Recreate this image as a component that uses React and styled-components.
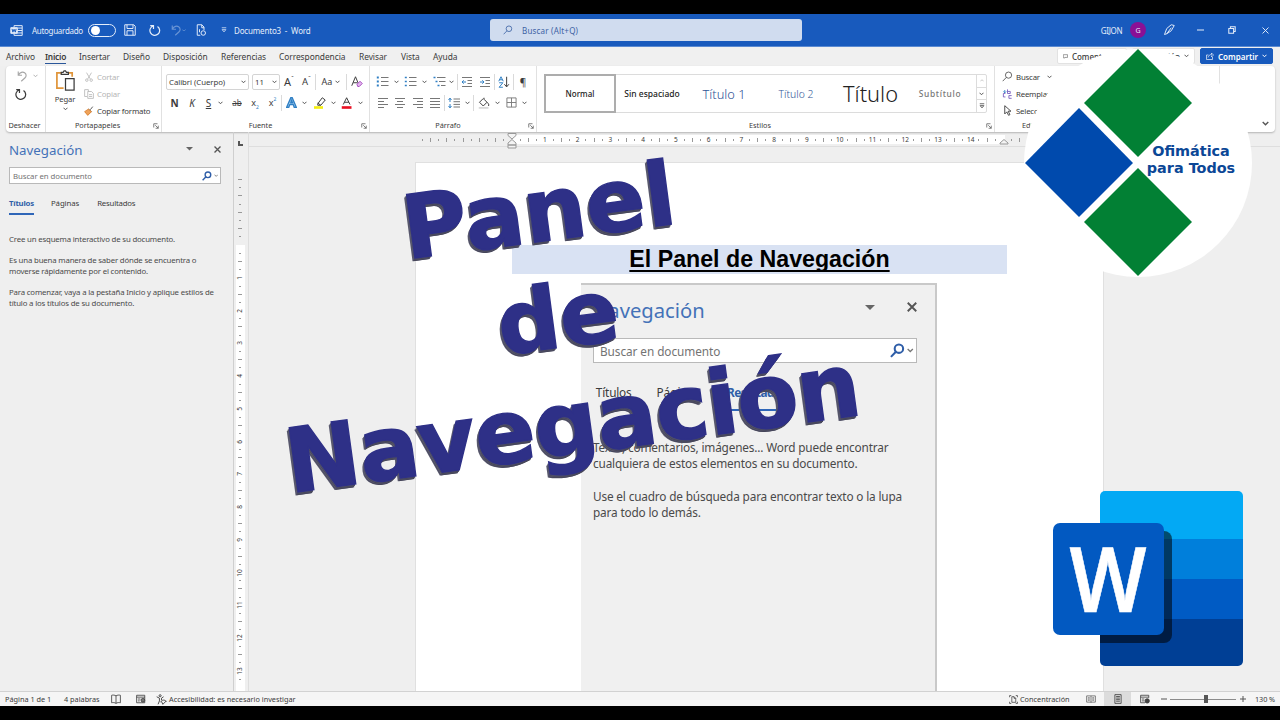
import styled, { createGlobalStyle, css } from "styled-components";

const GlobalStyle = createGlobalStyle`
  * {
    box-sizing: border-box;
  }

  body {
    margin: 0;
    background: #000;
    font-family: "Noto Sans", "Open Sans", sans-serif;
    font-size: 8px;
    color: #3b3b3b;
    overflow: hidden;
  }
`;

const Screen = styled.div`
  width: 1280px;
  height: 720px;
  padding: 14px 0;
  position: relative;
  overflow: hidden;
  background: #000;
`;
const Window = styled.div`
  height: 692px;
  display: flex;
  flex-direction: column;
  background: #efefef;
`;

/* title bar */
const TitleBar = styled.header`
  height: 33px;
  flex: none;
  display: flex;
  align-items: center;
  background: #185abd;
  border-bottom: 1px solid #5a8ad2;
  color: #e4edfa;
`;
const TitleLeft = styled.div`
  width: 490px;
  display: flex;
  align-items: center;
`;
const TitleItem = styled.div`
  width: ${(props) => props.$w}px;
  flex: none;
  display: flex;
  align-items: center;
  justify-content: ${(props) => (props.$start ? "flex-start" : "center")};
  white-space: nowrap;
  letter-spacing: ${(props) => props.$ls || 0}px;
  opacity: ${(props) => (props.$dim ? 0.4 : 1)};
`;
const Toggle = styled.div`
  width: 28px;
  height: 13px;
  border: 1px solid #e4edfa;
  border-radius: 7px;
  padding: 1px 2px;

  &::before {
    content: "";
    display: block;
    width: 9px;
    height: 9px;
    border-radius: 50%;
    background: #fff;
  }
`;
const TitleSearch = styled.div`
  width: 312px;
  height: 22px;
  display: flex;
  align-items: center;
  gap: 9px;
  padding-left: 13px;
  border-radius: 3px;
  background: #d0dcef;
  color: #3c62a4;
  letter-spacing: 0.2px;
`;
const TitleRight = styled.div`
  flex: 1;
  display: flex;
  justify-content: flex-end;
`;
const Avatar = styled.div`
  width: 16px;
  height: 16px;
  border-radius: 50%;
  display: flex;
  align-items: center;
  justify-content: center;
  background: #8a1095;
  font-size: 7px;
`;

/* ribbon */
const TabRow = styled.nav`
  height: 19px;
  flex: none;
  display: flex;
  padding-left: 6px;
  background: #f0f0f0;
`;
const Tab = styled.div`
  width: ${(props) => props.$w}px;
  font-size: 8.4px;
  line-height: 19px;
  white-space: nowrap;
  letter-spacing: -0.05px;

  span {
    display: inline-block;
    height: 17px;
  }
  ${(props) =>
    props.$active &&
    css`
      font-weight: 600;
      letter-spacing: -0.25px;

      span {
        border-bottom: 1.5px solid #2b579a;
      }
    `}
`;
const TabActions = styled.div`
  margin-left: auto;
  padding: 1px 7px 0 0;
  display: flex;
  gap: 5px;
`;
const ActionButton = styled.div`
  height: 16px;
  width: ${(props) => props.$w}px;
  display: flex;
  align-items: center;
  justify-content: ${(props) => (props.$end ? "flex-end" : "flex-start")};
  gap: 4px;
  padding: 0 5px;
  border-radius: 2px;
  border: 1px solid ${(props) => (props.$primary ? "#185abd" : "#e2e2e2")};
  background: ${(props) => (props.$primary ? "#185abd" : "#fff")};
  color: ${(props) => (props.$primary ? "#fff" : "#3b3b3b")};
  font-weight: ${(props) => (props.$primary ? 600 : 500)};
  white-space: nowrap;
`;
const Ribbon = styled.section`
  height: 66px;
  flex: none;
  margin: 0 5px 0 6px;
  display: flex;
  background: #fff;
  border-radius: 4px;
  box-shadow: 0 1px 2px rgba(0, 0, 0, 0.25);
`;
const Group = styled.div`
  width: ${(props) => props.$w}px;
  flex: none;
  display: flex;
  flex-direction: column;
  border-right: 1px solid #e1e1e1;
`;
const GroupBody = styled.div`
  height: 53px;
  padding: ${(props) => props.$pad || "0"};
  display: flex;
  flex-direction: ${(props) => (props.$column ? "column" : "row")};
`;
const GroupLabel = styled.div`
  height: 13px;
  display: flex;
  align-items: center;
  padding-right: 2px;
  font-size: 7.3px;
  line-height: 13px;

  span {
    flex: 1;
    text-align: ${(props) => (props.$left ? "left" : "center")};
    padding-left: ${(props) => props.$left || 0}px;
    padding-right: ${(props) => props.$right || 0}px;
  }
`;
const ToolRow = styled.div`
  height: ${(props) => props.$h || 21}px;
  display: flex;
  align-items: center;
`;
const Tool = styled.div`
  width: ${(props) => props.$w}px;
  height: 16px;
  flex: none;
  display: flex;
  align-items: center;
  justify-content: center;
  gap: ${(props) => props.$gap ?? 5}px;
  border-right: ${(props) => (props.$rule ? "1px solid #dadada" : 0)};
  font-size: ${(props) => props.$size || 10}px;
  line-height: 16px;
  opacity: ${(props) => (props.$dim ? 0.45 : 1)};
`;
const Script = styled.span`
  align-self: ${(props) => (props.$low ? "flex-end" : "flex-start")};
  font-size: ${(props) => props.$size || 5}px;
  line-height: ${(props) => (props.$low ? 7 : 9)}px;
  color: ${(props) => props.$color || "#2f7fc4"};
`;
const Combo = styled.div`
  width: ${(props) => props.$w}px;
  height: 16px;
  margin-right: ${(props) => props.$mr || 0}px;
  padding: 0 2px;
  display: flex;
  align-items: center;
  justify-content: space-between;
  border: 1px solid #d4d4d4;
  border-radius: 2px;
  font-size: 7.8px;
  letter-spacing: -0.05px;
`;
const Paste = styled.div`
  width: 38px;
  display: flex;
  flex-direction: column;
  align-items: center;
  font-size: 7.6px;
  line-height: 15px;
  letter-spacing: -0.1px;
`;
const Commands = styled.div`
  display: flex;
  flex-direction: column;
`;
const Command = styled.div`
  height: 17.2px;
  display: flex;
  align-items: center;
  gap: 3px;
  font-size: 7.8px;
  letter-spacing: -0.18px;
  white-space: nowrap;
  color: ${(props) => (props.$disabled ? "#b5b5b5" : "#3b3b3b")};
`;
const Gallery = styled.div`
  width: 443px;
  height: 39px;
  display: flex;
  border: 1px solid #dcdcdc;
  border-radius: 2px;
`;
const StyleCard = styled.div`
  width: 72px;
  margin: -1px 0 -1px ${(props) => (props.$selected ? -1 : 0)}px;
  padding-left: ${(props) => props.$pl || 0}px;
  display: flex;
  align-items: center;
  justify-content: center;
  white-space: nowrap;
  border: ${(props) => (props.$selected ? "2px solid #adadad" : 0)};
  font-size: ${(props) => props.$size || 8}px;
  font-weight: ${(props) => props.$weight || 500};
  letter-spacing: ${(props) => props.$ls || 0}px;
  color: ${(props) => props.$color || "#222"};
`;
const GalleryScroll = styled.div`
  width: 10px;
  margin-left: auto;
  border-left: 1px solid #dcdcdc;
  display: flex;
  flex-direction: column;

  div {
    flex: 1;
    display: flex;
    align-items: center;
    justify-content: center;
    border-bottom: 1px solid #dcdcdc;
  }
  div:last-child {
    border-bottom: 0;
  }
`;
const RibbonEnd = styled.div`
  flex: 1;
  display: flex;
  align-items: flex-end;
  justify-content: flex-end;
  padding: 0 6px 6px 0;
`;

/* navigation pane */
const Body = styled.main`
  flex: 1;
  min-height: 0;
  display: flex;
`;
const NavPane = styled.aside`
  width: 234px;
  padding: 8px 12px 0 9px;
  border-right: 1px solid #cfcfcf;
`;
const NavHead = styled.div`
  height: 22px;
  margin-bottom: 5px;
  display: flex;
  align-items: center;
  color: #666;

  svg {
    position: relative;
    top: -2px;
  }
`;
const NavTitle = styled.h2`
  flex: 1;
  margin: 0;
  font-weight: 400;
  font-size: ${(props) => props.$size}px;
  line-height: 1.2;
  color: #4472b8;
`;
const SearchField = styled.div`
  height: ${(props) => props.$h}px;
  display: flex;
  align-items: center;
  gap: 2px;
  padding: 0 2px 0 ${(props) => props.$px}px;
  border: 1px solid #b9b9b9;
  background: #fff;
  color: #737373;
  font-size: ${(props) => props.$size}px;
  letter-spacing: -0.07px;

  span {
    flex: 1;
  }
`;
const NavTabs = styled.div`
  display: flex;
  margin: ${(props) => props.$mt}px 0 ${(props) => props.$mb}px;
  font-size: ${(props) => props.$size}px;
  white-space: nowrap;
`;
const NavTab = styled.div`
  margin-right: ${(props) => props.$mr || 0}px;
  height: ${(props) => props.$h}px;
  letter-spacing: ${(props) => props.$ls || 0}px;
  ${(props) =>
    props.$active &&
    css`
      font-weight: 700;
      color: #2f5ea8;
      border-bottom: 2px solid #2f66b8;
    `}
`;
const NavText = styled.p`
  margin: 0 0 ${(props) => props.$gap}px;
  font-size: ${(props) => props.$size}px;
  line-height: ${(props) => props.$lh}px;
  letter-spacing: -0.16px;
  white-space: nowrap;
  color: #4a4a4a;
`;

/* rulers */
const VerticalRuler = styled.div`
  width: 15px;
  border-right: 1px solid #dedede;
  padding: 0 4px 0 2px;
  display: flex;
  flex-direction: column;
  overflow: hidden;
  background: linear-gradient(#fff, #fff) 2px 113px / 9px 460px no-repeat;
`;
const Corner = styled.div`
  height: 43.5px;
  flex: none;
  padding: 5px 0 0 2px;
`;
const VerticalMark = styled.div`
  height: 8.2px;
  flex: none;
  display: flex;
  align-items: center;
  justify-content: center;
  font-size: 6.5px;
  line-height: 8px;

  span {
    transform: rotate(-90deg);
  }
`;
const HorizontalRuler = styled.div`
  height: 15px;
  flex: none;
  padding: 1px 0 0 169px;
  display: flex;
  align-items: center;
  overflow: hidden;
  border-bottom: 1px solid #dedede;
  background: linear-gradient(#fff, #fff) 263px 3px / 493px 9px no-repeat;
`;
const HorizontalMark = styled.div`
  width: 8.2px;
  flex: none;
  display: flex;
  justify-content: center;
  font-size: 6.5px;
  line-height: 9px;
`;
const Tick = styled.i`
  width: ${(props) => (props.$vertical ? props.$len : 1)}px;
  height: ${(props) => (props.$vertical ? 1 : props.$len)}px;
  background: #999;
`;
const IndentMarker = styled.svg`
  position: absolute;
  left: ${(props) => props.$x}px;
  top: 0;
`;

/* document */
const Workspace = styled.div`
  flex: 1;
  display: flex;
  flex-direction: column;
  position: relative;
  min-width: 0;
`;
const Page = styled.article`
  width: 689px;
  flex: 1;
  min-height: 0;
  margin: 15px 0 0 166px;
  padding: 82px 96px 0 96px;
  background: #fff;
  border: 1px solid #e0e0e0;
  border-bottom: 0;
  overflow: hidden;
`;
const Heading = styled.h1`
  width: 495px;
  height: 29px;
  margin: 0;
  padding-top: 1px;
  text-align: center;
  background: #d9e2f3;
  color: #000;
  font: bold 23.2px/27px "Liberation Sans", Arial, sans-serif;

  span {
    text-decoration: underline;
    text-decoration-thickness: 2px;
    text-underline-offset: 3px;
    text-decoration-skip-ink: none;
  }
`;
const PastedPane = styled.section`
  width: 356px;
  height: 409px;
  margin: 9px 0 0 69px;
  padding: 11px 18px 0 12px;
  background: #f0f0f0;
  border-top: 2px solid #c9c9c9;
  border-right: 2px solid #c9c9c9;
`;
const PastedHead = styled(NavHead)`
  height: 28px;
  margin-bottom: 14px;

  svg {
    top: -3px;
  }
`;

/* status bar */
const StatusBar = styled.footer`
  height: 15px;
  flex: none;
  display: flex;
  align-items: center;
  border-top: 1px solid #d2d2d2;
  background: #f5f5f5;
  font-size: 7.3px;
`;
const StatusItem = styled.div`
  width: ${(props) => props.$w}px;
  height: 100%;
  flex: none;
  display: flex;
  align-items: center;
  justify-content: ${(props) => (props.$center ? "center" : "flex-start")};
  gap: 2px;
  padding-left: ${(props) => props.$pl || 0}px;
  white-space: nowrap;
  letter-spacing: ${(props) => props.$ls || 0}px;
  background: ${(props) => (props.$on ? "#dcdcdc" : "transparent")};
`;
const StatusRight = styled.div`
  height: 100%;
  margin-left: auto;
  display: flex;
`;
const ZoomTrack = styled.div`
  width: 66px;
  height: 1px;
  display: flex;
  align-items: center;
  justify-content: center;
  background: #8c8c8c;

  &::before {
    content: "";
    width: 4px;
    height: 8px;
    margin-left: 6px;
    background: #555;
  }
`;

/* overlays */
const Badge = styled.div`
  position: absolute;
  left: 1024px;
  top: 49px;
  width: 228px;
  height: 228px;
  border-radius: 50%;
  background: #fff;

  svg {
    display: block;
  }
`;
const BadgeText = styled.div`
  position: absolute;
  left: 117px;
  top: 94px;
  width: 100px;
  text-align: center;
  white-space: nowrap;
  font: bold 14.4px/17px "DejaVu Sans", Verdana, sans-serif;
  color: #0b4796;
`;
const WordLogo = styled.svg`
  position: absolute;
  left: 1053px;
  top: 491px;
`;
const WordArt = styled.div`
  position: absolute;
  left: ${(props) => props.$x}px;
  top: ${(props) => props.$y - 75}px;
  font: bold ${(props) => props.$size || 88}px/89px "DejaVu Sans", Verdana, sans-serif;
  letter-spacing: ${(props) => props.$ls || 0}px;
  white-space: nowrap;
  color: #2e3087;
  -webkit-text-stroke: 1.4px #2e3087;
  transform: rotate(${(props) => props.$angle || -7.5}deg);
  transform-origin: 0 75px;
  text-shadow: -1px 1px 0 #50506a, -1px 2px 0 #46465a, -2px 2px 0 #5b5b70,
    -2px 3px 0 #46465a, -3px 3px 0 #5b5b70;
`;

const Icon = ({ w = 12, h = w, box = 16, color = "currentColor", sw = 1.3, children }) => (
  <svg
    width={w}
    height={h}
    viewBox={`0 0 ${box} ${box}`}
    fill='none'
    stroke={color}
    strokeWidth={sw}
  >
    {children}
  </svg>
);

const Chevron = ({ size = 5, color = "#555" }) => (
  <svg width={size} height={size * 0.7} viewBox='0 0 10 7' fill='none' stroke={color} strokeWidth='2'>
    <path d='M1 1.5l4 4 4-4' />
  </svg>
);
const Caret = ({ size = 9 }) => (
  <svg width={size} height={size / 2} viewBox='0 0 10 5'>
    <path d='M0 0h10L5 5z' fill='#666' />
  </svg>
);
const Close = ({ size = 7, color = "#555", sw = 1.5 }) => (
  <svg width={size} height={size} viewBox='0 0 8 8' stroke={color} strokeWidth={sw}>
    <path d='M.6.6l6.8 6.8M7.4.6L.6 7.4' />
  </svg>
);
const Undo = ({ color, size = 12 }) => (
  <Icon w={size} color={color} sw={1.5}>
    <path d='M3 2v5h5M3.3 6.7C5.500 3 9 2 11.500 3.700s2.700 5 .3 7L7 15' />
  </Icon>
);
const Redo = ({ color, size = 13 }) => (
  <Icon w={size} color={color} sw={1.5}>
    <path d='M1.500 2h4v4M10.500 3a6 6 0 1 1-5-.8' />
  </Icon>
);
const Magnifier = ({ size = 12, color = "#555", sw = 1.3 }) => (
  <Icon w={size} color={color} sw={sw}>
    <circle cx='9.500' cy='6' r='4.500' />
    <path d='M6.300 9.300L1 14.800' />
  </Icon>
);
const More = () => (
  <svg width='6' height='6' viewBox='0 0 8 8' fill='none' stroke='currentColor'>
    <path d='M1 1h6M1.500 3.500h5L4 6.500z' />
  </svg>
);
const Launcher = () => (
  <Icon w={6} box={8} color='#555' sw={1}>
    <path d='M1 6V1h5M3 3l4 4M7 3.500V7H3.500' />
  </Icon>
);
const Lines = ({ rows }) => (
  <Icon w={12} h={12} box={12} color='#777' sw={1}>
    {rows.map(([x1, x2], i) => (
      <path key={i} d={`M${x1} ${1.5 + i * 3}H${x2}`} />
    ))}
  </Icon>
);
const List = ({ kind }) => (
  <Icon w={13} h={13} box={13} color='#777' sw={1}>
    {[2.5, 6.5, 10.5].map((y, i) => (
      <g key={y}>
        <path d={`M${kind === "multi" ? 4 + i * 2 : 5} ${y}H12.500`} />
        <path
          d={`M${kind === "multi" ? 0.5 + i * 2 : 0.8} ${y}h2`}
          stroke='#2f7fc4'
          strokeWidth={kind === "bullet" ? 2 : 1.5}
        />
      </g>
    ))}
  </Icon>
);
const Dent = ({ left }) => (
  <Icon w={12} box={12} color='#777' sw={1}>
    <path d='M1 1.500h10M6.500 4.500H11M6.500 7.500H11M1 10.500h10' />
    <path d={left ? "M5 6H1M2.700 4.300L1 6l1.700 1.700" : "M1 6h4M3.300 4.300L5 6 3.300 7.700"} stroke='#2f7fc4' />
  </Icon>
);

const tabs = [
  ["Archivo", 39],
  ["Inicio", 34],
  ["Insertar", 44],
  ["Diseño", 40],
  ["Disposición", 58],
  ["Referencias", 58],
  ["Correspondencia", 80],
  ["Revisar", 42],
  ["Vista", 32],
  ["Ayuda", 40],
];

const range = (from, to) => Array.from({ length: to - from + 1 }, (_, i) => from + i);

const Mark = ({ n, vertical }) => {
  if (n === 0 || n === 60) return null;
  if (n > 0 && n % 4 === 0) return <span>{n / 4}</span>;
  return <Tick $vertical={vertical} $len={n % 2 === 0 ? 4 : 2} />;
};

const Search = ({ h, px, size, icon }) => (
  <SearchField $h={h} $px={px} $size={size}>
    <span>Buscar en documento</span>
    <Magnifier size={icon} color='#2f5ea8' sw={2.2} />
    <Chevron size={icon / 2.3} color='#777' />
  </SearchField>
);

function Title() {
  return (
    <TitleBar>
      <TitleLeft>
        <TitleItem $w={32}>
          <Icon w={13} sw={1.2}>
            <path d='M5 4V2h10v12H5v-2M9 5h6M9 8h6M9 11h6' />
            <path d='M1 4.500h8v7H1z' fill='currentColor' />
            <path d='M2.500 6l1 4L5 6.500 6.500 10l1-4' stroke='#185abd' />
          </Icon>
        </TitleItem>
        <TitleItem $w={56} $start $ls={-0.3}>
          Autoguardado
        </TitleItem>
        <TitleItem $w={28}>
          <Toggle />
        </TitleItem>
        <TitleItem $w={27}>
          <Icon w={12}>
            <path d='M1 1h12l2 2v12H1zM4 1v5h8V1M4 15V9h8v6' />
          </Icon>
        </TitleItem>
        <TitleItem $w={24}>
          <Redo />
        </TitleItem>
        <TitleItem $w={21} $dim>
          <Undo />
          <Chevron color='#fff' size={4} />
        </TitleItem>
        <TitleItem $w={26}>
          <Icon w={12}>
            <path d='M3 1h6l3 3v4M3 1v14h4M9 1v4h3' />
            <circle cx='11' cy='12' r='3' />
            <path d='M6 7v4' />
          </Icon>
        </TitleItem>
        <TitleItem $w={20}>
          <More />
        </TitleItem>
        <TitleItem $w={90} $start $ls={-0.17}>
          Documento3 &nbsp;- &nbsp;Word
        </TitleItem>
      </TitleLeft>
      <TitleSearch>
        <Magnifier size={10} color='#3c62a4' />
        Buscar (Alt+Q)
      </TitleSearch>
      <TitleRight>
        <TitleItem $w={29} $ls={-0.3}>
          GIJON
        </TitleItem>
        <TitleItem $w={24}>
          <Avatar>G</Avatar>
        </TitleItem>
        <TitleItem $w={38}>
          <Icon w={12}>
            <path d='M2 14L5 6l6-5 4 1-4 7-6 4zM5 13l6-8' />
          </Icon>
        </TitleItem>
        <TitleItem $w={25}>
          <svg width='7' height='2'>
            <path d='M0 1h7' stroke='currentColor' />
          </svg>
        </TitleItem>
        <TitleItem $w={37}>
          <Icon w={8} box={10}>
            <path d='M1 3h6v6H1zM3 3V1h6v6H7' />
          </Icon>
        </TitleItem>
        <TitleItem $w={30}>
          <Close color='#e4edfa' sw={1.1} />
        </TitleItem>
      </TitleRight>
    </TitleBar>
  );
}

function Tabs() {
  return (
    <TabRow>
      {tabs.map(([name, w]) => (
        <Tab key={name} $w={w} $active={name === "Inicio"}>
          <span>{name}</span>
        </Tab>
      ))}
      <TabActions>
        <ActionButton $w={70}>
          <Icon w={9} sw={1.6}>
            <path d='M1 2h14v9H7l-3 3v-3H1z' />
          </Icon>
          Comentarios
        </ActionButton>
        <ActionButton $w={63} $end>
          Edición <Chevron />
        </ActionButton>
        <ActionButton $w={73} $primary>
          <Icon w={8}>
            <path d='M5 6H1v9h12v-5M4 11c1-4 4-6 7-6V2l4 4-4 4V7' />
          </Icon>
          Compartir
          <Chevron color='#fff' />
        </ActionButton>
      </TabActions>
    </TabRow>
  );
}

function FontGroup() {
  return (
    <Group $w={208}>
      <GroupBody $column $pad='5px 0 0 4px'>
        <ToolRow>
          <Combo $w={83} $mr={3}>
            Calibri (Cuerpo) <Chevron />
          </Combo>
          <Combo $w={28}>
            11 <Chevron />
          </Combo>
          <Tool $w={18} $gap={0} $size={11}>
            A
            <Script $size={7} $color='#555'>
              ˆ
            </Script>
          </Tool>
          <Tool $w={18} $rule $gap={0} $size={9.5}>
            A
            <Script $size={7} $color='#555'>
              ˇ
            </Script>
          </Tool>
          <Tool $w={31} $rule $gap={3} $size={9}>
            Aa
            <Chevron />
          </Tool>
          <Tool $w={19}>
            <Icon w={12}>
              <path d='M1 13L6 1l5 12M3 9h5' />
              <path d='M8 11l4-4 3 3-4 4H9z' stroke='#a64ac0' fill='#e3b6ee' />
            </Icon>
          </Tool>
        </ToolRow>
        <ToolRow>
          <Tool $w={17}>
            <b>N</b>
          </Tool>
          <Tool $w={18}>
            <i>K</i>
          </Tool>
          <Tool $w={27} $gap={7}>
            <u>S</u>
            <Chevron />
          </Tool>
          <Tool $w={18} $size={8}>
            <s>ab</s>
          </Tool>
          <Tool $w={18} $gap={0} $size={9}>
            x<Script $low>2</Script>
          </Tool>
          <Tool $w={18} $rule $gap={0} $size={9}>
            x<Script>2</Script>
          </Tool>
          <Tool $w={29}>
            <Icon w={11} color='#2f7fc4' sw={2}>
              <path d='M1 15L7 1h2l6 14h-3l-1.500-4h-5L4 15zM7 8.500h2.500L8 5z' fill='#a9d0ee' />
            </Icon>
            <Chevron />
          </Tool>
          <Tool $w={28}>
            <Icon w={12}>
              <path d='M5 9l6-8 4 3-6 7H5zM5 8l4 3' />
              <path d='M0 14h12' stroke='#f4ee10' strokeWidth='3.500' />
            </Icon>
            <Chevron />
          </Tool>
          <Tool $w={26}>
            <Icon w={12}>
              <path d='M3 10L7.500 1 12 10M4.500 7h6' />
              <path d='M1 14h13' stroke='#e81123' strokeWidth='3.500' />
            </Icon>
            <Chevron />
          </Tool>
        </ToolRow>
      </GroupBody>
      <GroupLabel $right={2}>
        <span>Fuente</span>
        <Launcher />
      </GroupLabel>
    </Group>
  );
}

function ParagraphGroup() {
  return (
    <Group $w={167}>
      <GroupBody $column $pad='5px 0 0 4px'>
        <ToolRow>
          <Tool $w={27}>
            <List kind='bullet' />
            <Chevron />
          </Tool>
          <Tool $w={28}>
            <List kind='number' />
            <Chevron />
          </Tool>
          <Tool $w={29} $rule $gap={3}>
            <List kind='multi' />
            <Chevron />
          </Tool>
          <Tool $w={18}>
            <Dent left />
          </Tool>
          <Tool $w={19} $rule>
            <Dent />
          </Tool>
          <Tool $w={19} $rule>
            <Icon w={12}>
              <path d='M1 7l3-6 3 6M2 5h4M1.500 9h5l-5 6h5' stroke='#2f7fc4' />
              <path d='M11.500 1v13M8.500 11l3 3.500 3-3.500' />
            </Icon>
          </Tool>
          <Tool $w={18}>¶</Tool>
        </ToolRow>
        <ToolRow>
          <Tool $w={17}>
            <Lines rows={[[1, 11], [1, 7], [1, 11], [1, 7]]} />
          </Tool>
          <Tool $w={18}>
            <Lines rows={[[1, 11], [3, 9], [1, 11], [3, 9]]} />
          </Tool>
          <Tool $w={17}>
            <Lines rows={[[1, 11], [5, 11], [1, 11], [5, 11]]} />
          </Tool>
          <Tool $w={19} $rule>
            <Lines rows={[[1, 11], [1, 11], [1, 11], [1, 11]]} />
          </Tool>
          <Tool $w={29} $rule>
            <Icon w={12} box={12} color='#777' sw={1}>
              <path d='M5.500 2H12M5.500 4.700H12M5.500 7.400H12M5.500 10H12' />
              <path d='M2 1v4M2 7v4M.5 3L2 1.200 3.500 3M.5 9L2 10.800 3.500 9' stroke='#2f7fc4' />
            </Icon>
            <Chevron />
          </Tool>
          <Tool $w={29}>
            <Icon w={12}>
              <path d='M7 2L2 7l5 5 5-5-4-4V1M12 7c2 2 3 3 2 5' />
              <path d='M1 14.500h13' stroke='#d9d9d9' strokeWidth='2.500' />
            </Icon>
            <Chevron />
          </Tool>
          <Tool $w={26}>
            <Icon w={11} box={12} sw={1} color='#777'>
              <path d='M1 1h10v10H1zM6 1v10M1 6h10' />
            </Icon>
            <Chevron />
          </Tool>
        </ToolRow>
      </GroupBody>
      <GroupLabel $right={2}>
        <span>Párrafo</span>
        <Launcher />
      </GroupLabel>
    </Group>
  );
}

function StylesGroup() {
  return (
    <Group $w={458}>
      <GroupBody $pad='8px 0 0 7px'>
        <Gallery>
          <StyleCard $selected>Normal</StyleCard>
          <StyleCard $size={8.5}>Sin espaciado</StyleCard>
          <StyleCard $size={12.8} $weight={300} $color='#2f5496'>
            Título 1
          </StyleCard>
          <StyleCard $size={10.4} $weight={300} $color='#2f5496'>
            Título 2
          </StyleCard>
          <StyleCard $size={21.8} $weight={300} $pl={5}>
            Título
          </StyleCard>
          <StyleCard $size={8.4} $ls={0.7} $color='#777'>
            Subtítulo
          </StyleCard>
          <GalleryScroll>
            <div>
              <svg width='4' height='3' viewBox='0 0 10 7' fill='none' stroke='#bbb' strokeWidth='2'>
                <path d='M1 5.500l4-4 4 4' />
              </svg>
            </div>
            <div>
              <Chevron />
            </div>
            <div>
              <More />
            </div>
          </GalleryScroll>
        </Gallery>
      </GroupBody>
      <GroupLabel $right={3}>
        <span>Estilos</span>
        <Launcher />
      </GroupLabel>
    </Group>
  );
}

function RibbonBar() {
  return (
    <Ribbon>
      <Group $w={40}>
        <GroupBody $column $pad='1px 0 0 8px'>
          <ToolRow $h={18}>
            <Tool $w={26} $dim>
              <Undo />
              <Chevron />
            </Tool>
          </ToolRow>
          <ToolRow $h={18}>
            <Tool $w={14}>
              <Redo />
            </Tool>
          </ToolRow>
        </GroupBody>
        <GroupLabel>
          <span>Deshacer</span>
        </GroupLabel>
      </Group>
      <Group $w={116}>
        <GroupBody $pad='3px 0 0 0'>
          <Paste>
            <Icon w={21} h={23} box={22} sw={1.3}>
              <path d='M7 3H2v16h7M14 3h4v4' stroke='#e0953a' strokeWidth='1.800' />
              <path d='M6.500 4.500V2.500h2l1-1.500h1.500l1 1.500h2v2z' />
              <path d='M11 9h9v12h-9z' fill='#fff' />
            </Icon>
            Pegar
            <Chevron />
          </Paste>
          <Commands>
            <Command $disabled>
              <Icon w={10}>
                <path d='M4 1l6 10M12 1L6 11' />
                <circle cx='4.500' cy='13' r='2' />
                <circle cx='11.500' cy='13' r='2' />
              </Icon>
              Cortar
            </Command>
            <Command $disabled>
              <Icon w={10}>
                <path d='M5 12H1V1h6v3M6 4h6l3 3v8H6zM8 9h5M8 12h5' />
              </Icon>
              Copiar
            </Command>
            <Command>
              <Icon w={10}>
                <path d='M10 6l4-5M7 5l5 4' />
                <path d='M7 5L1 9l5 6 6-6z' fill='#eea25a' stroke='#d97b25' />
              </Icon>
              Copiar formato
            </Command>
          </Commands>
        </GroupBody>
        <GroupLabel $right={4}>
          <span>Portapapeles</span>
          <Launcher />
        </GroupLabel>
      </Group>
      <FontGroup />
      <ParagraphGroup />
      <StylesGroup />
      <Group $w={225}>
        <GroupBody $pad='2px 0 0 7px'>
          <Commands>
            <Command>
              <Magnifier size={11} />
              Buscar &nbsp;
              <Chevron />
            </Command>
            <Command>
              <Icon w={11}>
                <path d='M8 2v6h4V5H8M5 8H2v5h3M10 15h4M14 11h-4v4' stroke='#7b5ec0' />
                <path d='M4 3v4M2 5l2 2 2-2' stroke='#2f7fc4' />
              </Icon>
              Reemplazar
            </Command>
            <Command>
              <Icon w={11}>
                <path d='M4 1v12l3-3 2.500 5 2-1L9 9h4z' />
              </Icon>
              Seleccionar
            </Command>
          </Commands>
        </GroupBody>
        <GroupLabel $left={27}>
          <span>Edición</span>
        </GroupLabel>
      </Group>
      <RibbonEnd>
        <Chevron size={7} />
      </RibbonEnd>
    </Ribbon>
  );
}

function NavigationPane() {
  return (
    <NavPane>
      <NavHead>
        <NavTitle $size={13.3}>Navegación</NavTitle>
        <TitleItem $w={28} $start>
          <Caret size={7} />
        </TitleItem>
        <Close size={7} />
      </NavHead>
      <Search h={17} px={3} size={7.8} icon={10} />
      <NavTabs $mt={14} $mb={19} $size={7.8}>
        <NavTab $active $h={17} $mr={17} $ls={-0.2}>
          Títulos
        </NavTab>
        <NavTab $h={17} $mr={18} $ls={-0.1}>
          Páginas
        </NavTab>
        <NavTab $h={17} $ls={-0.2}>
          Resultados
        </NavTab>
      </NavTabs>
      <NavText $size={7.8} $lh={10.9} $gap={10.3}>
        Cree un esquema interactivo de su documento.
      </NavText>
      <NavText $size={7.8} $lh={10.9} $gap={10.3}>
        Es una buena manera de saber dónde se encuentra o
        <br />
        moverse rápidamente por el contenido.
      </NavText>
      <NavText $size={7.8} $lh={10.9} $gap={0}>
        Para comenzar, vaya a la pestaña Inicio y aplique estilos de
        <br />
        título a los títulos de su documento.
      </NavText>
    </NavPane>
  );
}

function Document() {
  return (
    <Workspace>
      <HorizontalRuler>
        {range(-11, 74).map((n) => (
          <HorizontalMark key={n}>
            <Mark n={n} />
          </HorizontalMark>
        ))}
      </HorizontalRuler>
      <IndentMarker $x={258} width='10' height='17' fill='#f4f4f4' stroke='#999'>
        <path d='M1 1.500h8v2L5 7 1 3.500zM1 11l4-3.500L9 11v2H1zM1 13h8v3H1z' />
      </IndentMarker>
      <IndentMarker $x={750} width='10' height='17' fill='#f4f4f4' stroke='#999'>
        <path d='M1 11l4-3.500L9 11v1H1z' />
      </IndentMarker>
      <Page>
        <Heading>
          <span>El Panel de Navegación</span>
        </Heading>
        <PastedPane>
          <PastedHead>
            <NavTitle $size={20.2}>Navegación</NavTitle>
            <TitleItem $w={42} $start>
              <Caret size={10} />
            </TitleItem>
            <Close size={10} />
          </PastedHead>
          <Search h={25} px={6} size={11.8} icon={15} />
          <NavTabs $mt={21} $mb={28} $size={11.8}>
            <NavTab $h={27} $mr={25} $ls={-0.2}>
              &nbsp;Títulos
            </NavTab>
            <NavTab $h={27} $mr={27}>
              Páginas
            </NavTab>
            <NavTab $h={27} $active $ls={-0.6}>
              Resultados
            </NavTab>
          </NavTabs>
          <NavText $size={11.8} $lh={16.4} $gap={16}>
            Texto, comentarios, imágenes... Word puede encontrar
            <br />
            cualquiera de estos elementos en su documento.
          </NavText>
          <NavText $size={11.8} $lh={16.4} $gap={0}>
            Use el cuadro de búsqueda para encontrar texto o la lupa
            <br />
            para todo lo demás.
          </NavText>
        </PastedPane>
      </Page>
    </Workspace>
  );
}

function Status() {
  return (
    <StatusBar>
      <StatusItem $w={64} $pl={5}>
        Página 1 de 1
      </StatusItem>
      <StatusItem $w={40}>4 palabras</StatusItem>
      <StatusItem $w={24} $center>
        <Icon w={10}>
          <path d='M8 3C6 1.500 3 1.500 1 2v12c2-.5 5-.5 7 1 2-1.500 5-1.500 7-1V2c-2-.5-5-.5-7 1zM8 3v12' />
        </Icon>
      </StatusItem>
      <StatusItem $w={26} $center>
        <Icon w={10}>
          <path d='M1 2h13v12H1zM1 5h13M3 8h4M3 11h3' />
          <circle cx='11' cy='10' r='3' fill='#777' />
        </Icon>
      </StatusItem>
      <StatusItem $w={160} $pl={2}>
        <Icon w={11}>
          <circle cx='6' cy='2.500' r='1.500' />
          <path d='M1 4l4 2v4l-2 5M11 4L8 6v3M7 12c1-4 6-4 8-1M8 11l2 4 5-5' />
        </Icon>
        Accesibilidad: es necesario investigar
      </StatusItem>
      <StatusRight>
        <StatusItem $w={68}>
          <Icon w={9}>
            <path d='M1 4V1h3M12 1h3v3M1 12v3h3M15 12v3h-3M5 3h4l3 3v7H5zM9 3v3h3' />
          </Icon>
          Concentración
        </StatusItem>
        <StatusItem $w={27} $center>
          <Icon w={10} color='#666'>
            <path d='M8 3H1v10h7M8 3h7v10H8M8 3v11M3 6h3M3 8h3M3 10h3M10 6h3M10 8h3M10 10h3' />
          </Icon>
        </StatusItem>
        <StatusItem $w={27} $center $on>
          <Icon w={10}>
            <path d='M3 1h10v14H3zM5 4h6M5 6.500h6M5 9h6M5 11.500h6' />
          </Icon>
        </StatusItem>
        <StatusItem $w={28} $center>
          <Icon w={10}>
            <path d='M1 2h13v4M1 2v12h7M1 5h13M3 8h4M3 11h4' />
            <circle cx='11.500' cy='11' r='3.500' fill='#444' />
          </Icon>
        </StatusItem>
        <StatusItem $w={10} $center>
          <svg width='6' height='2'>
            <path d='M0 1h6' stroke='#555' />
          </svg>
        </StatusItem>
        <StatusItem $w={68} $center>
          <ZoomTrack />
        </StatusItem>
        <StatusItem $w={12} $center>
          <svg width='6' height='6'>
            <path d='M0 3h6M3 0v6' stroke='#555' />
          </svg>
        </StatusItem>
        <StatusItem $w={31} $pl={6} $ls={-0.1}>
          130 %
        </StatusItem>
      </StatusRight>
    </StatusBar>
  );
}

export default function App() {
  return (
    <Screen>
      <GlobalStyle />
      <Window>
        <Title />
        <Tabs />
        <RibbonBar />
        <Body>
          <NavigationPane />
          <VerticalRuler>
            <Corner>
              <svg width='5' height='5'>
                <path d='M1 0v4h4' fill='none' stroke='#555' strokeWidth='2' />
              </svg>
            </Corner>
            {range(-8, 53).map((n) => (
              <VerticalMark key={n}>
                <Mark n={n} vertical />
              </VerticalMark>
            ))}
          </VerticalRuler>
          <Document />
        </Body>
        <Status />
      </Window>

      <Badge>
        <svg width='228' height='228'>
          <path d='M114 0l54 54-54 54-54-54zM114 119l54 54-54 54-54-54z' fill='#028034' />
          <path d='M55 59l54 55-54 54L1 114z' fill='#004aad' />
        </svg>
        <BadgeText>
          Ofimática
          <br />
          para Todos
        </BadgeText>
      </Badge>

      <WordLogo width='190' height='175' viewBox='0 0 190 175'>
        <clipPath id='sheet'>
          <rect x='47' width='143' height='175' rx='5' />
        </clipPath>
        <g clipPath='url(#sheet)'>
          <rect x='47' width='143' height='48' fill='#03a9f4' />
          <rect x='47' y='48' width='143' height='40' fill='#007fdb' />
          <rect x='47' y='88' width='143' height='40' fill='#005bc4' />
          <rect x='47' y='128' width='143' height='47' fill='#003f95' />
          <rect x='20' y='40' width='99' height='112' rx='8' fill='#000' opacity='0.55' />
        </g>
        <rect y='32' width='111' height='112' rx='7' fill='#0259c1' />
        <text
          x='16.5'
          y='121'
          textLength='77'
          lengthAdjust='spacingAndGlyphs'
          fill='#fff'
          stroke='#fff'
          strokeWidth='0.6'
          fontFamily='Noto Sans, sans-serif'
          fontWeight='600'
          fontSize='90'
        >
          W
        </text>
      </WordLogo>

      <WordArt $x={407} $y={259} $ls={0}>
        Panel
      </WordArt>
      <WordArt $x={502} $y={356} $size={87}>
        de
      </WordArt>
      <WordArt $x={290} $y={493} $size={89} $ls={-0.6} $angle={-7.8}>
        Navegación
      </WordArt>
    </Screen>
  );
}
